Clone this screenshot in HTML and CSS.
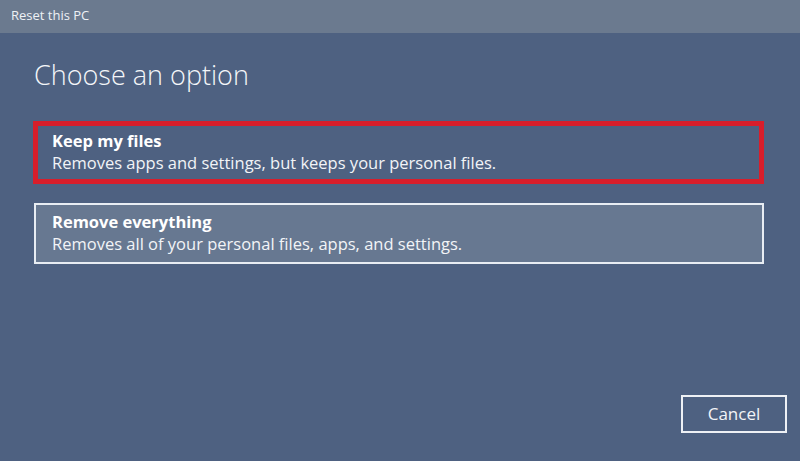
FILE: index.html
```html
<!DOCTYPE html>
<html>
<head>
<meta charset="utf-8">
<link rel="stylesheet" href="styles.css">
</head>
<body>
<div class="window">
  <div class="titlebar">Reset this PC</div>
  <div class="content">
    <h1 class="heading">Choose an option</h1>
    <div class="option option-selected">
      <div class="option-title">Keep my files</div>
      <div class="option-desc">Removes apps and settings, but keeps your personal files.</div>
    </div>
    <div class="option option-hover">
      <div class="option-title">Remove everything</div>
      <div class="option-desc">Removes all of your personal files, apps, and settings.</div>
    </div>
    <div class="footer">
      <button class="cancel">Cancel</button>
    </div>
  </div>
</div>
</body>
</html>
```
FILE: styles.css
```css
html, body {
  margin: 0;
  padding: 0;
  width: 800px;
  height: 461px;
  overflow: hidden;
}
body {
  font-family: "Open Sans", "Noto Sans", sans-serif;
  background: #4e6181;
  color: #ffffff;
}
.window {
  display: flex;
  flex-direction: column;
  height: 461px;
}
.titlebar {
  height: 33px;
  box-sizing: border-box;
  background: #6b7a8f;
  color: #eef1f5;
  font-size: 13px;
  line-height: 18px;
  padding: 6px 0 0 11px;
}
.content {
  flex: 1;
  display: flex;
  flex-direction: column;
  padding: 0 36px 0 33px;
}
.heading {
  margin: 24px 0 28px 1px;
  font-size: 27px;
  font-weight: 300;
  line-height: 36px;
  color: #f4f6f9;
}
.option {
  box-sizing: border-box;
  height: 63px;
  padding: 4px 14px 0;
  display: flex;
  flex-direction: column;
}
.option-selected {
  border: 5px solid #d81e2b;
}
.option-hover {
  margin: 19px 0 0 1px;
  height: 61px;
  border: 2px solid #e8edf3;
  background: #677891;
  padding: 6px 16px 0;
}
.option-title {
  font-size: 16.5px;
  font-weight: 700;
  line-height: 22px;
}
.option-desc {
  font-size: 16.5px;
  line-height: 22px;
  color: #f2f4f7;
}
.footer {
  flex: 1;
  display: flex;
  align-items: flex-end;
  justify-content: flex-end;
  margin-right: -23px;
  padding-bottom: 28px;
}
.cancel {
  width: 106px;
  height: 38px;
  box-sizing: border-box;
  background: transparent;
  border: 2px solid #eef1f5;
  color: #f2f4f7;
  font-family: "Open Sans", "Noto Sans", sans-serif;
  font-size: 17px;
  padding: 0 0 2px;
}
```
